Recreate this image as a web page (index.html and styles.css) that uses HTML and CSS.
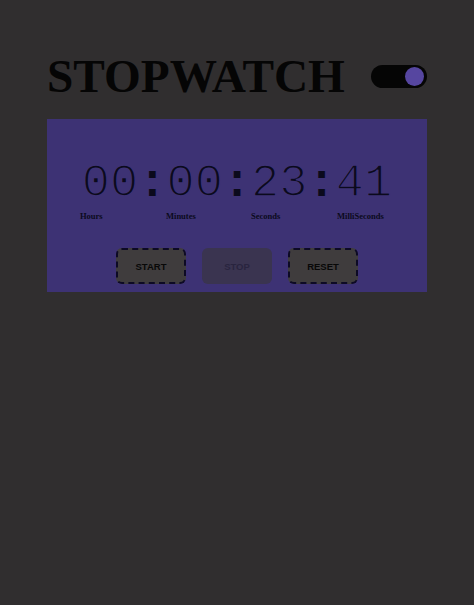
FILE: index.html
```html
<!DOCTYPE html>
<html lang="en">
<head>
    <meta charset="UTF-8">
    <meta name="viewport" content="width=device-width, initial-scale=1.0">
    <title>Stopwatch</title>
    <link rel="stylesheet" href="styles.css">
</head>
<body>
    <div class="container">
        <div class="header">
            <h1>STOPWATCH</h1>
            <div class="toggle"><span class="knob"></span></div>
        </div>

        <!-- Timer panel -->
        <div class="panel">
            <div class="time">
                <span>00</span><span class="sep">:</span><span>00</span><span class="sep">:</span><span>23</span><span class="sep">:</span><span>41</span>
            </div>
            <div class="labels">
                <span>Hours</span>
                <span>Minutes</span>
                <span>Seconds</span>
                <span>MilliSeconds</span>
            </div>
            <div class="buttons">
                <button class="btn">START</button>
                <button class="btn btn-off">STOP</button>
                <button class="btn">RESET</button>
            </div>
        </div>
    </div>
</body>
</html>
```

FILE: styles.css
```css
/* Dark stopwatch layout */
body { margin: 0; background-color: #302e2f; font-family: "Liberation Serif", serif; }
.container { width: 380px; margin: 0 auto; padding-top: 47px; }
.header { display: flex; align-items: center; justify-content: space-between; height: 58px; }
h1 { margin: 0; font-size: 47.3px; font-weight: bold; color: #050505; line-height: 58px; }
.toggle { width: 56px; height: 23px; background-color: #050505; border-radius: 12px; display: flex; align-items: center; justify-content: flex-end; padding-right: 3px; box-sizing: border-box; }
.knob { width: 19px; height: 19px; border-radius: 50%; background-color: #5646a0; }
.panel { margin-top: 14px; background-color: #3d3274; height: 173px; padding-top: 40px; box-sizing: border-box; }
/* thin digits: panel-coloured stroke eats into the glyph edges */
.time { font-family: "Liberation Mono", monospace; font-size: 47px; color: #0b0a1c; text-align: center; line-height: 50px; -webkit-text-stroke: 1.7px #3d3274; }
.time .sep { font-weight: bold; -webkit-text-stroke: 0; }
.labels { display: grid; grid-template-columns: 86px 85px 86px 90px; padding-left: 33px; margin-top: 2px; font-size: 8.5px; font-weight: bold; color: #0b0a1c; }
.buttons { display: flex; justify-content: center; gap: 16px; margin-top: 27px; }
.btn { width: 70px; height: 36px; border: 2px dashed #0d0a24; border-radius: 6px; background-color: #3f3c3d; color: #080808; font-family: "Liberation Sans", Arial, sans-serif; font-size: 9.5px; font-weight: bold; cursor: pointer; }
.btn-off { border-color: transparent; background-color: #3a3450; color: #29243f; }
```
